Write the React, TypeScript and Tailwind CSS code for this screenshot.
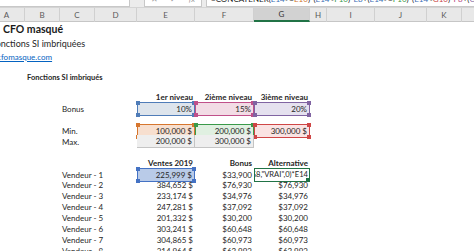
import React from "react";

// Column widths A..L — column A is partly scrolled off to the left
const GRID = "grid grid-cols-[36px_35px_35px_42px_58px_59px_56px_17px_48px_52px_35px_60px] -ml-[11px]";

const LETTERS = ["A", "B", "C", "D", "E", "F", "G", "H", "I", "J", "K", "L"];

const SALES = [
  { v: "Vendeur - 1", s: "225,999 $", b: "$33,900", a: "" },
  { v: "Vendeur - 2", s: "384,652 $", b: "$76,930", a: "$76,930" },
  { v: "Vendeur - 3", s: "233,174 $", b: "$34,976", a: "$34,976" },
  { v: "Vendeur - 4", s: "247,281 $", b: "$37,092", a: "$37,092" },
  { v: "Vendeur - 5", s: "201,332 $", b: "$30,200", a: "$30,200" },
  { v: "Vendeur - 6", s: "303,241 $", b: "$60,648", a: "$60,648" },
  { v: "Vendeur - 7", s: "304,865 $", b: "$60,973", a: "$60,973" },
  { v: "Vendeur - 8", s: "314,964 $", b: "$62,993", a: "$62,993" },
];

const Handles = ({ color }: { color: string }) => (
  <>
    <span className={`absolute -left-[2px] -top-[2px] w-[4px] h-[4px] ${color}`} />
    <span className={`absolute -right-[2px] -top-[2px] w-[4px] h-[4px] ${color}`} />
    <span className={`absolute -left-[2px] -bottom-[2px] w-[4px] h-[4px] ${color}`} />
    <span className={`absolute -right-[2px] -bottom-[2px] w-[4px] h-[4px] ${color}`} />
  </>
);

const Cell = ({
  children,
  className = "",
  handle,
  left,
}: {
  children?: React.ReactNode;
  className?: string;
  handle?: string;
  left?: boolean;
}) => (
  <div
    className={`relative h-full flex items-center whitespace-nowrap ${
      left ? "pl-[2px]" : "justify-end pr-[2px]"
    } ${className}`}
  >
    {children}
    {handle && <Handles color={handle} />}
  </div>
);

const Empty = ({ n }: { n: number }) => (
  <>
    {Array.from({ length: n }).map((_, i) => (
      <div key={i} />
    ))}
  </>
);

export default function App() {
  return (
    <div className="w-[474px] h-[251px] overflow-hidden bg-white font-['Lato',sans-serif] text-[#262626]">
      {/* Formula bar, top part scrolled off */}
      <div className="flex h-[20px] -mt-[12px] bg-[#ececec] border-b border-[#d4d4d4]">
        <div className="w-[130px] bg-white border-r border-b border-[#c8c8c8]" />
        <div className="w-[14px]" />
        <div className="w-[58px] bg-white border-x border-b border-[#c8c8c8] flex items-end justify-around pb-[2px] text-[8px] text-[#a0a0a0] leading-[10px]">
          <span>✕</span>
          <span>✓</span>
          <span className="italic">fx</span>
        </div>
        <div className="flex-1 ml-[4px] bg-white border-l border-b border-[#c8c8c8] pl-[4px] pb-[2px] flex items-end text-[8px] leading-[10px] whitespace-nowrap overflow-hidden">
          <span>=CONCATENER(</span>
          <span className="text-[#3d6fb6]">E14</span>
          <span>&gt;=</span>
          <span className="text-[#d0742c]">E10</span>
          <span>)*(</span>
          <span className="text-[#3d6fb6]">E14</span>
          <span>&lt;</span>
          <span className="text-[#3a9a4a]">F10</span>
          <span>)*</span>
          <span className="text-[#3d6fb6]">E8</span>
          <span>+(</span>
          <span className="text-[#3d6fb6]">E14</span>
          <span>&gt;=</span>
          <span className="text-[#3a9a4a]">F10</span>
          <span>)*(</span>
          <span className="text-[#3d6fb6]">E14</span>
          <span>&lt;</span>
          <span className="text-[#c94444]">G10</span>
          <span>)*</span>
          <span className="text-[#b5487f]">F8</span>
          <span>+(</span>
          <span className="text-[#8064a2]">G8</span>
          <span>,"VRAI",0)*E14</span>
        </div>
      </div>

      {/* Column headers */}
      <div className={`${GRID} h-[14px] bg-[#e8e8e8] border-b border-[#c6c6c6] text-[8px] text-[#5a5a5a]`}>
        {LETTERS.map((l) => (
          <div
            key={l}
            className={`flex items-center justify-center border-r border-[#d0d0d0] ${
              l === "G" ? "bg-[#d2d2d2] border-b-2 border-b-[#217346] text-[#333]" : ""
            }`}
          >
            {l}
          </div>
        ))}
      </div>

      {/* Rows 1-6 */}
      <div className="h-[15px] flex items-center pl-[3px] text-[10.5px] font-bold text-[#1a1a1a] whitespace-nowrap">
        CFO masqué
      </div>
      <div className="h-[13px] flex items-center pl-[2px] -ml-[11px] text-[9px] whitespace-nowrap">
        Fonctions SI imbriquées
      </div>
      <div className="h-[13px] flex items-center pl-[2px] -ml-[11px] text-[8px] text-[#0563c1] underline whitespace-nowrap">
        lecfomasque.com
      </div>
      <div className="h-[9px]" />
      <div className={`${GRID} h-[11px] text-[7.5px] font-bold`}>
        <div />
        <Cell left>Fonctions SI imbriqués</Cell>
      </div>
      <div className="h-[8px]" />

      {/* Level table */}
      <div className={`${GRID} h-[11px] text-[8px] font-bold`}>
        <Empty n={4} />
        <Cell>1er niveau</Cell>
        <Cell>2ième niveau</Cell>
        <Cell>3ième niveau</Cell>
      </div>
      <div className={`${GRID} h-[11px] text-[8px]`}>
        <Empty n={2} />
        <Cell left>Bonus</Cell>
        <div />
        <Cell className="bg-[#dde4ec] border border-[#4f7cb8]" handle="bg-[#4f7cb8]">10%</Cell>
        <Cell className="bg-[#f2dce5] border border-[#c0508a]" handle="bg-[#c0508a]">15%</Cell>
        <Cell className="bg-[#e5e1ef] border border-[#8064a2]" handle="bg-[#8064a2]">20%</Cell>
      </div>
      <div className="h-[11px]" />
      <div className={`${GRID} h-[11px] text-[8px]`}>
        <Empty n={2} />
        <Cell left>Min.</Cell>
        <div />
        <Cell className="bg-[#f7dfcf] border border-[#d6762e]" handle="bg-[#d6762e]">100,000 $</Cell>
        <Cell className="bg-[#e0f0e1] border border-[#3a9a4a]" handle="bg-[#3a9a4a]">200,000 $</Cell>
        <Cell className="bg-[#fae3e3] border border-[#cf4646]" handle="bg-[#cf4646]">300,000 $</Cell>
      </div>
      <div className={`${GRID} h-[11px] text-[8px]`}>
        <Empty n={2} />
        <Cell left>Max.</Cell>
        <div />
        <Cell className="bg-[#eeeeee] border-r border-b border-[#c4c4c4]">200,000 $</Cell>
        <Cell className="bg-[#eeeeee] border-r border-b border-[#c4c4c4]">300,000 $</Cell>
      </div>
      <div className="h-[11px]" />

      {/* Sales table */}
      <div className={`${GRID} h-[11px] text-[8px] font-bold`}>
        <Empty n={4} />
        <Cell>Ventes 2019</Cell>
        <Cell>Bonus</Cell>
        <Cell>Alternative</Cell>
      </div>
      {SALES.map((r, i) => (
        <div key={r.v} className={`${GRID} h-[11px] text-[8px]`}>
          <Empty n={2} />
          <Cell left>{r.v}</Cell>
          <div />
          {i === 0 ? (
            <Cell className="bg-[#b9cbe8] border border-[#4472c4]" handle="bg-[#4472c4]">
              {r.s}
            </Cell>
          ) : (
            <Cell>{r.s}</Cell>
          )}
          <Cell>{r.b}</Cell>
          {i === 0 ? (
            <div className="relative h-full flex items-center justify-end pr-[1px] whitespace-nowrap overflow-hidden border border-[#217346] bg-white text-[7.6px]">
              =SI(E14&gt;=G10,G8,"VRAI",0)*E14
              <span className="absolute right-0 bottom-0 w-[3px] h-[3px] bg-[#217346]" />
            </div>
          ) : (
            <Cell>{r.a}</Cell>
          )}
        </div>
      ))}
    </div>
  );
}
